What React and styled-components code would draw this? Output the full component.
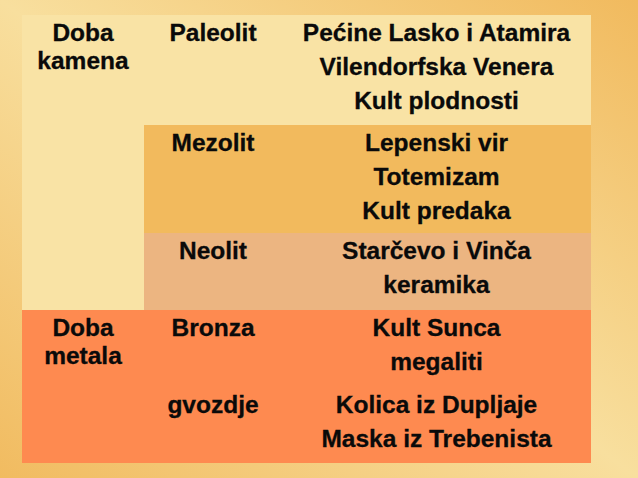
import React from "react";
import styled, { createGlobalStyle } from "styled-components";

const GlobalStyle = createGlobalStyle`
  html, body {
    margin: 0;
    padding: 0;
  }
  body {
    font-family: "Liberation Sans", Arial, sans-serif;
  }
`;

const tones = {
  light: "#f9e3a5",
  mezo: "#f2ba5d",
  neo: "#ecb581",
  metal: "#fe8a50",
};

const rows = [
  {
    era: "Doba kamena",
    eraSpan: 3,
    eraTone: "light",
    period: "Paleolit",
    tone: "light",
    lines: ["Pećine Lasko i Atamira", "Vilendorfska Venera", "Kult plodnosti"],
  },
  {
    period: "Mezolit",
    tone: "mezo",
    lines: ["Lepenski vir", "Totemizam", "Kult predaka"],
  },
  {
    period: "Neolit",
    tone: "neo",
    lines: ["Starčevo i Vinča", "keramika"],
  },
  {
    era: "Doba metala",
    eraSpan: 2,
    eraTone: "metal",
    period: "Bronza",
    tone: "metal",
    lines: ["Kult Sunca", "megaliti"],
  },
  {
    period: "gvozdje",
    tone: "metal",
    lines: ["Kolica iz Dupljaje", "Maska iz Trebenista"],
  },
];

const App = () => {
  return (
    <>
      <GlobalStyle />
      <Slide>
        <Table>
          {rows.map((row, index) => (
            <React.Fragment key={index}>
              {row.era && (
                <EraCell tone={row.eraTone} span={row.eraSpan}>
                  {row.era.split(" ").map((word) => (
                    <div key={word}>{word}</div>
                  ))}
                </EraCell>
              )}
              <PeriodCell tone={row.tone}>{row.period}</PeriodCell>
              <DetailCell tone={row.tone}>
                {row.lines.map((line) => (
                  <Line key={line}>{line}</Line>
                ))}
              </DetailCell>
            </React.Fragment>
          ))}
        </Table>
      </Slide>
    </>
  );
};

const Slide = styled.div`
  width: 638px;
  height: 478px;
  box-sizing: border-box;
  padding: 15px 0 0 22px;
  background: linear-gradient(to bottom left, #f1ba5e 0%, #f8df9e 50%, #f1bb60 100%);
  overflow: hidden;
`;

const Table = styled.div`
  display: grid;
  grid-template-columns: 122px 138px 309px;
  grid-template-rows: 110px 108px 77px 77px 76px;
  width: 569px;
  color: #0a0a0a;
  font-size: 24.5px;
  font-weight: 700;
  -webkit-text-stroke: 0.3px #0a0a0a;
`;

const Cell = styled.div`
  background-color: ${(props) => tones[props.tone]};
  text-align: center;
  box-sizing: border-box;
`;

const EraCell = styled(Cell)`
  grid-column: 1;
  grid-row: span ${(props) => props.span};
  padding-top: 4px;
  line-height: 28px;
`;

const PeriodCell = styled(Cell)`
  grid-column: 2;
  padding-top: 1px;
  line-height: 34px;
`;

const DetailCell = styled(Cell)`
  grid-column: 3;
  padding-top: 1px;
`;

const Line = styled.div`
  line-height: 34px;
`;

export default App;
